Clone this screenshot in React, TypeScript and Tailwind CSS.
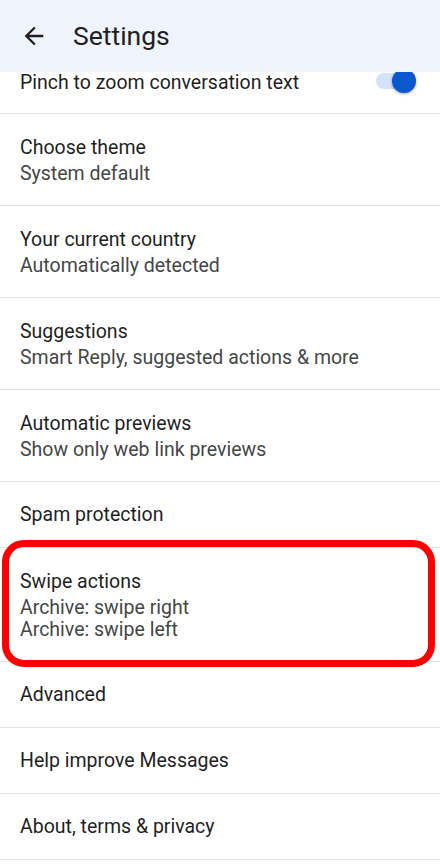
import React from "react";

interface Row {
  title: string;
  lines?: string[];
  toggle?: boolean;
  highlight?: boolean;
}

const ROWS: Row[] = [
  { title: "Pinch to zoom conversation text", toggle: true },
  { title: "Choose theme", lines: ["System default"] },
  { title: "Your current country", lines: ["Automatically detected"] },
  { title: "Suggestions", lines: ["Smart Reply, suggested actions & more"] },
  { title: "Automatic previews", lines: ["Show only web link previews"] },
  { title: "Spam protection" },
  { title: "Swipe actions", lines: ["Archive: swipe right", "Archive: swipe left"], highlight: true },
  { title: "Advanced" },
  { title: "Help improve Messages" },
  { title: "About, terms & privacy" },
];

function BackArrow(): React.ReactElement {
  return (
    <svg width="28" height="28" viewBox="0 0 24 24" fill="#1f1f1f">
      <path d="M20 11H7.83l5.59-5.59L12 4l-8 8 8 8 1.41-1.41L7.83 13H20v-2z" />
    </svg>
  );
}

function Toggle(): React.ReactElement {
  return (
    <div className="relative -mt-[3px] w-[40px] h-[24px] flex items-center">
      <div className="w-[36px] h-[16px] rounded-full bg-[#d3e3fd]" />
      <div className="absolute right-0 top-0 w-[24px] h-[24px] rounded-full bg-[#0b57d0] shadow-[0_1px_3px_rgba(0,0,0,0.35)]" />
    </div>
  );
}

function SettingRow({ row, first }: { row: Row; first: boolean }): React.ReactElement {
  const lineCount = row.lines?.length ?? 0;
  // first row is scrolled partly under the app bar
  const height = first
    ? "h-[42px] items-start"
    : lineCount === 0
      ? "h-[66px] items-center"
      : lineCount === 1
        ? "h-[92px] items-center"
        : "h-[114px] items-center";
  return (
    <div
      className={[
        "relative flex pl-[20px] pr-[24px] border-b border-[#e3e3e3]",
        height,
      ].join(" ")}
    >
      <div className="flex-1 flex flex-col">
        <span
          className={[
            "text-[19.5px] text-[#1f1f1f]",
            first ? "leading-[20px] pt-[1px]" : "leading-[26px]",
          ].join(" ")}
        >
          {row.title}
        </span>
        {row.lines && (
          <div className="mt-[2px] flex flex-col">
            {row.lines.map((l) => (
              <span key={l} className="text-[19.5px] leading-[22px] text-[#444746]">
                {l}
              </span>
            ))}
          </div>
        )}
      </div>
      {row.toggle && <Toggle />}
      {/* red annotation frame */}
      {row.highlight && (
        <div className="absolute -top-[8px] -bottom-[6px] left-[2px] right-[5px] border-[7px] border-[#ff0000] rounded-[22px] z-10" />
      )}
    </div>
  );
}

export default function App(): React.ReactElement {
  return (
    <div
      className="w-[440px] h-[864px] overflow-hidden flex flex-col bg-white"
      style={{ fontFamily: "Roboto, 'Noto Sans', sans-serif" }}
    >
      <div className="relative z-20 h-[72px] shrink-0 bg-[#eff3fb] flex items-center pl-[20px]">
        <BackArrow />
        <span className="ml-[25px] text-[26.5px] text-[#1f1f1f] leading-none">Settings</span>
      </div>
      <div className="flex-1 overflow-hidden">
        {ROWS.map((r, i) => (
          <SettingRow key={r.title} row={r} first={i === 0} />
        ))}
      </div>
    </div>
  );
}
